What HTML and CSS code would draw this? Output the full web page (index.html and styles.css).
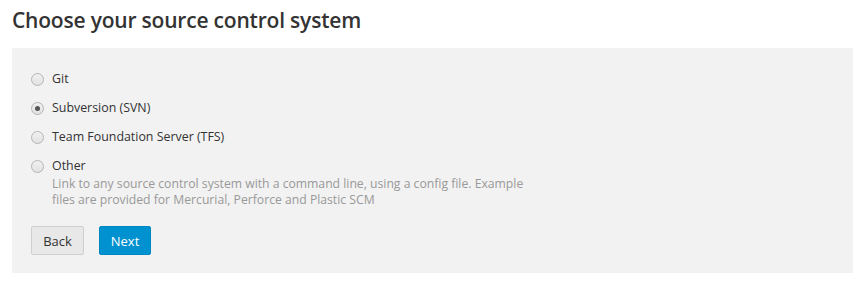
FILE: index.html
```html
<!DOCTYPE html>
<html>
<head>
<meta charset="utf-8">
<link rel="stylesheet" href="styles.css">
</head>
<body>
<h1 class="title">Choose your source control system</h1>
<div class="panel">
  <div class="options">
    <label class="option">
      <span class="radio"></span>
      <span class="text">Git</span>
    </label>
    <label class="option">
      <span class="radio checked"></span>
      <span class="text">Subversion (SVN)</span>
    </label>
    <label class="option">
      <span class="radio"></span>
      <span class="text">Team Foundation Server (TFS)</span>
    </label>
    <label class="option">
      <span class="radio"></span>
      <span class="text">Other
        <span class="desc">Link to any source control system with a command line, using a config file. Example files are provided for Mercurial, Perforce and Plastic SCM</span>
      </span>
    </label>
  </div>
  <div class="buttons">
    <button class="btn btn-back">Back</button>
    <button class="btn btn-next">Next</button>
  </div>
</div>
</body>
</html>
```
FILE: styles.css
```css
html, body {
  margin: 0;
  padding: 0;
  background: #fff;
}
body {
  font-family: "Open Sans", "Noto Sans", sans-serif;
  color: #333;
}
.title {
  margin: 0;
  padding: 6px 0 0 12px;
  height: 48px;
  box-sizing: border-box;
  font-size: 21px;
  font-weight: 600;
  color: #333;
  letter-spacing: -0.2px;
}
.panel {
  margin-left: 12px;
  width: 841px;
  height: 225px;
  box-sizing: border-box;
  background: #f2f2f2;
  padding: 22px 0 0 19px;
}
.options {
  display: flex;
  flex-direction: column;
  gap: 11px;
}
.option {
  display: flex;
  align-items: flex-start;
  gap: 8px;
  font-size: 12.4px;
  line-height: 18px;
  color: #333;
}
.radio {
  width: 11px;
  height: 11px;
  margin-top: 3px;
  border: 1px solid #b5b5b5;
  border-radius: 50%;
  background: linear-gradient(#f0f0f0, #e2e2e2);
  flex: none;
  position: relative;
}
.radio.checked::after {
  content: "";
  position: absolute;
  left: 3px;
  top: 3px;
  width: 5px;
  height: 5px;
  border-radius: 50%;
  background: #555;
}
.desc {
  display: block;
  width: 490px;
  color: #999;
  margin-top: 1px;
  line-height: 16px;
  font-size: 12.2px;
}
.buttons {
  display: flex;
  gap: 15px;
  margin-top: 18px;
}
.btn {
  height: 29px;
  padding: 0;
  font-family: inherit;
  font-size: 13px;
  border-radius: 2px;
  cursor: pointer;
}
.btn-back {
  width: 53px;
  background: #e8e8e8;
  border: 1px solid #cfcfcf;
  color: #333;
}
.btn-next {
  width: 52px;
  background: #0091d0;
  border: 1px solid #0087c2;
  color: #fff;
}
```
